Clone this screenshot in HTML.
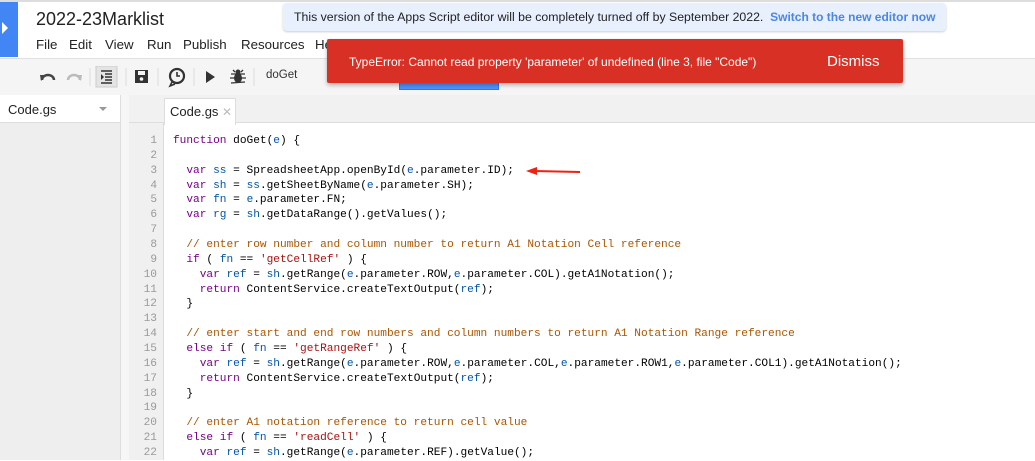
<!DOCTYPE html>
<html><head><style>
body{margin:0;width:1035px;height:460px;overflow:hidden;background:#fff;font-family:"Liberation Sans",Arial,sans-serif;position:relative}
.a{position:absolute}
.m{position:absolute;top:37px;font-size:13.3px;color:#222}
.code{font-family:"Liberation Mono",monospace;font-size:11.15px;white-space:pre;line-height:14.86px;color:#000}
.k{color:#708}.v{color:#05a}.s{color:#a11}.c{color:#a50}
.ln{font-family:"Liberation Mono",monospace;font-size:11.15px;line-height:14.86px;color:#999;text-align:right;width:27px}
</style></head><body>
<div class="a" style="left:0;top:0;width:1035px;height:2px;background:#ddd"></div>
<div class="a" style="left:0;top:2px;width:18px;height:55px;background:#4285f4"></div>
<div class="a" style="left:2px;top:22px;width:0;height:0;border-left:6px solid #fff;border-top:6px solid transparent;border-bottom:6px solid transparent"></div>
<div class="a" style="left:36px;top:9px;font-size:18px;color:#222">2022-23Marklist</div>
<div class="m" style="left:36px">File</div><div class="m" style="left:69px">Edit</div><div class="m" style="left:105px">View</div><div class="m" style="left:147px">Run</div><div class="m" style="left:183px">Publish</div><div class="m" style="left:241px">Resources</div><div class="m" style="left:315px">Help</div>
<div class="a" style="left:0;top:58px;width:1035px;height:36px;background:#f5f5f5;border-top:1px solid #e0e0e0;border-bottom:1px solid #ddd"></div>
<svg class="a" style="left:38px;top:66px" width="250" height="22">
<path d="M4 14 A6 5 0 0 1 16 14" fill="none" stroke="#444" stroke-width="2.5"/><path d="M2 9 L8 9 L3 15Z" fill="#444"/>
<path d="M30 14 A6 5 0 0 1 42 14" fill="none" stroke="#bbb" stroke-width="2.5"/><path d="M44 9 L38 9 L43 15Z" fill="#bbb"/>
<line x1="52" y1="2" x2="52" y2="20" stroke="#ddd"/>
<rect x="58" y="0" width="21" height="21" fill="#e4e4e4" stroke="#ccc"/>
<path d="M63 5h11M67 8h7M67 11h7M67 14h7M63 17h11" stroke="#333" stroke-width="1.5"/><path d="M63 8l3 3-3 3z" fill="#333"/>
<line x1="88" y1="2" x2="88" y2="20" stroke="#ddd"/>
<rect x="97" y="4" width="13" height="13" fill="#333"/><rect x="100" y="5" width="7" height="4" fill="#f5f5f5"/><circle cx="103.5" cy="13" r="1.8" fill="#f5f5f5"/>
<line x1="120" y1="2" x2="120" y2="20" stroke="#ddd"/>
<circle cx="139" cy="10" r="7" fill="none" stroke="#333" stroke-width="2.2"/><path d="M139 6v4h3M134 16l-2 4 5-2" stroke="#333" stroke-width="1.6" fill="none"/>
<line x1="156" y1="2" x2="156" y2="20" stroke="#ddd"/>
<path d="M168 5l9 6-9 6z" fill="#333"/>
<ellipse cx="200" cy="12" rx="4" ry="5" fill="#333"/><circle cx="200" cy="6" r="2.5" fill="#333"/><path d="M193 8l14 0M192 12h16M193 17l14-1M195 4l2 2M205 4l-2 2" stroke="#333" stroke-width="1.3"/>
<line x1="216" y1="2" x2="216" y2="20" stroke="#ddd"/>
</svg>
<div class="a" style="left:266px;top:69px;font-size:11.5px;color:#333">doGet</div>
<div class="a" style="left:399px;top:78px;width:98px;height:10px;background:#4d90fe;border:1px solid #3079ed"></div>
<div class="a" style="left:283px;top:3px;width:663px;height:28px;background:#e8f0fe;border-radius:4px;box-shadow:0 1px 2px rgba(0,0,0,.2)"></div>
<div class="a" style="left:294px;top:10px;font-size:12.3px;color:#222">This version of the Apps Script editor will be completely turned off by September 2022. <span style="color:#4a86e8;font-weight:bold;font-size:12px">&nbsp;Switch to the new editor now</span></div>
<div class="a" style="left:327px;top:39px;width:576px;height:44px;background:#d93025;border-radius:2px;box-shadow:0 2px 4px rgba(0,0,0,.3)"></div>
<div class="a" style="left:349px;top:55px;font-size:12px;color:#fff">TypeError: Cannot read property 'parameter' of undefined (line 3, file "Code")</div>
<div class="a" style="left:827px;top:53px;font-size:15px;color:#fff">Dismiss</div>
<div class="a" style="left:0;top:95px;width:120px;height:365px;background:#eee"></div>
<div class="a" style="left:0;top:95px;width:120px;height:27px;background:#fff;border-bottom:1px solid #ddd"></div>
<div class="a" style="left:8px;top:102px;font-size:13px;color:#222">Code.gs</div>
<div class="a" style="left:99px;top:107px;border-left:4px solid transparent;border-right:4px solid transparent;border-top:4px solid #999"></div>
<div class="a" style="left:120px;top:95px;width:8px;height:365px;background:#f6f6f6;border-left:1px solid #ddd"></div>
<div class="a" style="left:129px;top:95px;width:906px;height:27px;background:#f1f1f1;border-bottom:1px solid #ddd"></div>
<div class="a" style="left:164px;top:98px;width:70px;height:26px;background:#fff;border:1px solid #ddd;border-bottom:none"></div>
<div class="a" style="left:170px;top:104px;font-size:13px;color:#222">Code.gs <span style="color:#bbb;font-size:12px">✕</span></div>
<div class="a" style="left:129px;top:123px;width:34px;height:337px;background:#f0f0f0;border-right:1px solid #ddd"></div>
<div class="a ln" style="left:130px;top:134px">1<br>2<br>3<br>4<br>5<br>6<br>7<br>8<br>9<br>10<br>11<br>12<br>13<br>14<br>15<br>16<br>17<br>18<br>19<br>20<br>21<br>22</div>
<div class="a code" style="left:173px;top:134px"><span class="k">function</span> doGet(<span class="v">e</span>) {

  <span class="k">var</span> <span class="v">ss</span> = SpreadsheetApp.openById(<span class="v">e</span>.parameter.ID);
  <span class="k">var</span> <span class="v">sh</span> = <span class="v">ss</span>.getSheetByName(<span class="v">e</span>.parameter.SH);
  <span class="k">var</span> <span class="v">fn</span> = <span class="v">e</span>.parameter.FN;
  <span class="k">var</span> <span class="v">rg</span> = <span class="v">sh</span>.getDataRange().getValues();

  <span class="c">// enter row number and column number to return A1 Notation Cell reference</span>
  <span class="k">if</span> ( <span class="v">fn</span> == <span class="s">'getCellRef'</span> ) {
    <span class="k">var</span> <span class="v">ref</span> = <span class="v">sh</span>.getRange(<span class="v">e</span>.parameter.ROW,<span class="v">e</span>.parameter.COL).getA1Notation();
    <span class="k">return</span> ContentService.createTextOutput(<span class="v">ref</span>);
  }

  <span class="c">// enter start and end row numbers and column numbers to return A1 Notation Range reference</span>
  <span class="k">else if</span> ( <span class="v">fn</span> == <span class="s">'getRangeRef'</span> ) {
    <span class="k">var</span> <span class="v">ref</span> = <span class="v">sh</span>.getRange(<span class="v">e</span>.parameter.ROW,<span class="v">e</span>.parameter.COL,<span class="v">e</span>.parameter.ROW1,<span class="v">e</span>.parameter.COL1).getA1Notation();
    <span class="k">return</span> ContentService.createTextOutput(<span class="v">ref</span>);
  }

  <span class="c">// enter A1 notation reference to return cell value</span>
  <span class="k">else if</span> ( <span class="v">fn</span> == <span class="s">'readCell'</span> ) {
    <span class="k">var</span> <span class="v">ref</span> = <span class="v">sh</span>.getRange(<span class="v">e</span>.parameter.REF).getValue();</div>
<svg class="a" style="left:524px;top:165px" width="62" height="12"><path d="M10 6 L56 7" stroke="#e21" stroke-width="2"/><path d="M2 6 L13 2 L13 10Z" fill="#e21"/></svg>
</body></html>
